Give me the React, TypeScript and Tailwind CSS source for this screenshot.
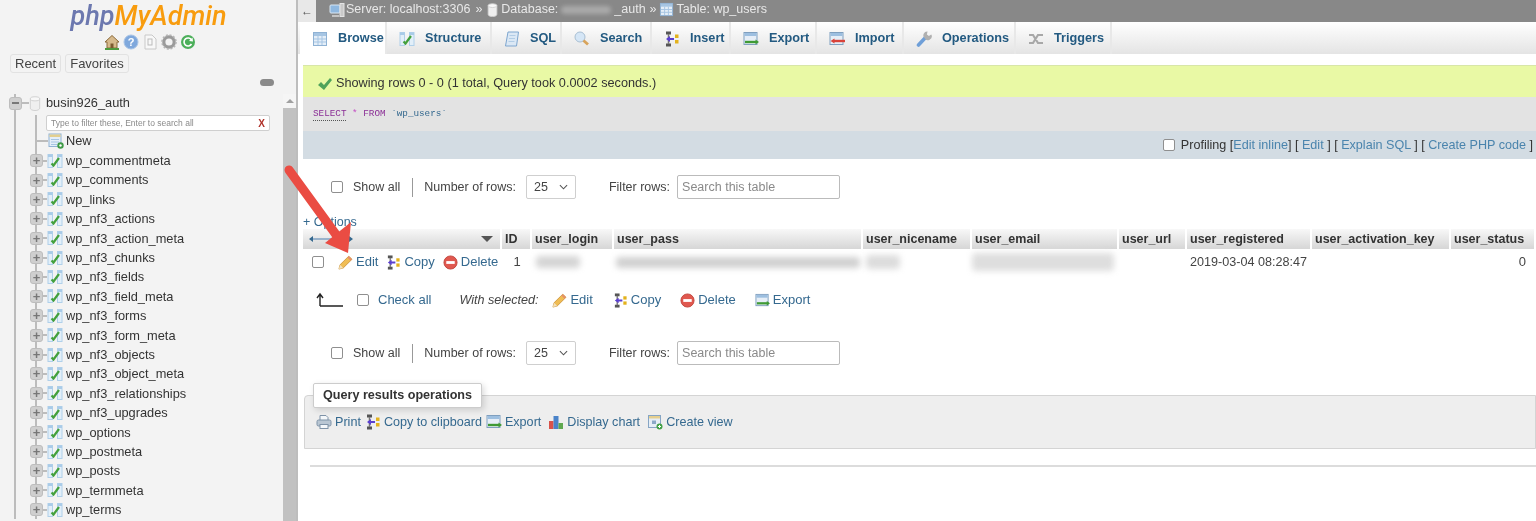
import type { ReactNode } from 'react';

const tables = [
  'wp_commentmeta', 'wp_comments', 'wp_links', 'wp_nf3_actions', 'wp_nf3_action_meta', 'wp_nf3_chunks',
  'wp_nf3_fields', 'wp_nf3_field_meta', 'wp_nf3_forms', 'wp_nf3_form_meta', 'wp_nf3_objects',
  'wp_nf3_object_meta', 'wp_nf3_relationships', 'wp_nf3_upgrades', 'wp_options', 'wp_postmeta',
  'wp_posts', 'wp_termmeta', 'wp_terms',
];

function GridIcon({ className = '' }: { className?: string }) {
  return (
    <svg viewBox="0 0 16 16" className={className}>
      <rect x="1.5" y="1.5" width="13" height="13" fill="#e4eef8" stroke="#8fb2d4" />
      <rect x="2" y="2" width="12" height="3" fill="#a6c5e3" />
      <path d="M6 5v9M10 5v9M2 8h12M2 11h12" stroke="#a6c5e3" fill="none" />
    </svg>
  );
}

function NewTableIcon({ className = '' }: { className?: string }) {
  return (
    <svg viewBox="0 0 16 16" className={className}>
      <rect x="1" y="1" width="12" height="12.5" fill="#e4eef8" stroke="#8fb2d4" />
      <rect x="1.5" y="1.5" width="11" height="2.5" fill="#e3cf8e" />
      <path d="M3 6.5h8M3 9h8M3 11.5h6" stroke="#a6c5e3" fill="none" />
      <circle cx="12.5" cy="12.5" r="3.2" fill="#3f9a47" />
      <circle cx="12.5" cy="12.5" r="1.2" fill="#fff" />
    </svg>
  );
}

function StructureIcon({ className = '' }: { className?: string }) {
  return (
    <svg viewBox="0 0 16 16" className={className}>
      <rect x="1" y="1.5" width="4.5" height="13" fill="#e2eff9" stroke="#b0d0ea" />
      <rect x="10.5" y="1.5" width="4.5" height="13" fill="#e2eff9" stroke="#b0d0ea" />
      <rect x="1" y="1.5" width="4.5" height="2.5" fill="#a9cbe8" />
      <rect x="10.5" y="1.5" width="4.5" height="2.5" fill="#a9cbe8" />
      <path d="M4.5 10.5l2 2L12 5" stroke="#43a03c" strokeWidth="2.2" fill="none" />
    </svg>
  );
}

function SqlIcon({ className = '' }: { className?: string }) {
  return (
    <svg viewBox="0 0 16 16" className={className}>
      <path d="M4 1h10.5L12.5 15H1.5z" fill="#dbe8f5" stroke="#7ea6cf" />
      <path d="M5.5 4.5h6M5 7.5h6M4.5 10.5h6" stroke="#b2cde6" fill="none" />
    </svg>
  );
}

function SearchIcon({ className = '' }: { className?: string }) {
  return (
    <svg viewBox="0 0 16 16" className={className}>
      <circle cx="6" cy="6" r="5" fill="#d5e6f6" stroke="#a9bfd3" />
      <path d="M9.5 9.5l4.5 4" stroke="#d8a45c" strokeWidth="2.8" fill="none" />
    </svg>
  );
}

function InsertIcon({ className = '' }: { className?: string }) {
  return (
    <svg viewBox="0 0 16 16" className={className}>
      <rect x="2" y="0.5" width="5" height="3" fill="#555" />
      <rect x="2" y="12.5" width="5" height="3" fill="#555" />
      <path d="M4.5 3v10" stroke="#777" strokeWidth="1.5" fill="none" />
      <path d="M2 8l4-3v2h4v2H6v2z" fill="#5a3fd0" />
      <rect x="11" y="3.5" width="3.5" height="3.5" fill="#e3b21c" />
      <rect x="11" y="9" width="3.5" height="3.5" fill="#e3b21c" />
    </svg>
  );
}

function ExportIcon({ className = '' }: { className?: string }) {
  return (
    <svg viewBox="0 0 16 16" className={className}>
      <rect x="1" y="1.5" width="13" height="12" fill="#e6eef7" stroke="#7f9fbf" />
      <rect x="1.5" y="2" width="12" height="3" fill="#9dbfe0" />
      <path d="M2 11h11" stroke="#3f9a35" strokeWidth="2.4" fill="none" />
      <path d="M12.5 8.5L16 11l-3.5 2.5z" fill="#3f9a35" />
    </svg>
  );
}

function ImportIcon({ className = '' }: { className?: string }) {
  return (
    <svg viewBox="0 0 16 16" className={className}>
      <rect x="1" y="1.5" width="13" height="12" fill="#e6eef7" stroke="#7f9fbf" />
      <rect x="1.5" y="2" width="12" height="3" fill="#9dbfe0" />
      <path d="M5 10h11" stroke="#d9433a" strokeWidth="2.4" fill="none" />
      <path d="M5.5 7.5L1.5 10l4 2.5z" fill="#d9433a" />
    </svg>
  );
}

function WrenchIcon({ className = '' }: { className?: string }) {
  return (
    <svg viewBox="0 0 16 16" className={className}>
      <path d="M2.5 14L10 6" stroke="#6f9fd8" strokeWidth="3.6" strokeLinecap="round" fill="none" />
      <path d="M8.5 7a3.8 3.8 0 0 1 3-6.5l-.6 3 2 1.5 2.4-1.5a3.8 3.8 0 0 1-6.8 3.5z" fill="#b0b0b0" />
    </svg>
  );
}

function TriggerIcon({ className = '' }: { className?: string }) {
  return (
    <svg viewBox="0 0 16 16" className={className}>
      <path d="M1 4h4l5 8h5M1 12h4l5-8h5" stroke="#a8a8a8" strokeWidth="2.2" fill="none" />
    </svg>
  );
}

function PencilIcon({ className = '' }: { className?: string }) {
  return (
    <svg viewBox="0 0 16 16" className={className}>
      <path d="M1 15l1.2-4.6L11.5 1.2l3.4 3.4-9.3 9.2z" fill="#f0bd54" stroke="#c58a2b" strokeWidth="0.8" />
      <path d="M1 15l1.2-4.6 3.4 3.4z" fill="#f3e2bd" />
      <path d="M11.5 1.2l3.4 3.4-1.5 1.5-3.4-3.4z" fill="#e58f6b" />
    </svg>
  );
}

function DeleteIcon({ className = '' }: { className?: string }) {
  return (
    <svg viewBox="0 0 16 16" className={className}>
      <circle cx="8" cy="8" r="7" fill="#e0584f" stroke="#c2463e" />
      <rect x="3.5" y="6.5" width="9" height="3" fill="#fff" />
    </svg>
  );
}

function PrintIcon({ className = '' }: { className?: string }) {
  return (
    <svg viewBox="0 0 16 16" className={className}>
      <path d="M4 6V1.5h6l2 2V6" fill="#f4f7fa" stroke="#7f93a8" />
      <rect x="1" y="6" width="14" height="6" rx="1.5" fill="#b9c6d3" stroke="#7f93a8" />
      <rect x="4" y="10.5" width="8" height="4" fill="#f4f7fa" stroke="#7f93a8" />
    </svg>
  );
}

function ChartIcon({ className = '' }: { className?: string }) {
  return (
    <svg viewBox="0 0 16 16" className={className}>
      <rect x="1" y="7" width="4.5" height="8" fill="#d9534a" />
      <rect x="5.5" y="2" width="5" height="13" fill="#4a83c9" />
      <rect x="10.5" y="9" width="4.5" height="6" fill="#5fa84f" />
    </svg>
  );
}

function ViewIcon({ className = '' }: { className?: string }) {
  return (
    <svg viewBox="0 0 16 16" className={className}>
      <rect x="1.5" y="1.5" width="12" height="12" fill="#e6eef6" stroke="#86a5c4" />
      <rect x="2" y="2" width="11" height="2.5" fill="#e5cf8f" />
      <rect x="5" y="6.5" width="4" height="3.5" fill="#8ba9c7" />
      <circle cx="12.5" cy="12.5" r="3" fill="#43a047" />
      <path d="M11 12.5h3M12.5 11v3" stroke="#fff" />
    </svg>
  );
}

function DbIcon({ className = '' }: { className?: string }) {
  return (
    <svg viewBox="0 0 12 16" className={className}>
      <path d="M1 3v10c0 1.4 2.2 2.5 5 2.5s5-1.1 5-2.5V3z" fill="#efefef" stroke="#cfcfcf" />
      <ellipse cx="6" cy="3" rx="5" ry="2.2" fill="#f8f8f8" stroke="#cfcfcf" />
    </svg>
  );
}

function ServerIcon({ className = '' }: { className?: string }) {
  return (
    <svg viewBox="0 0 16 16" className={className}>
      <rect x="1" y="3" width="10" height="8" rx="1" fill="#8fb8e0" stroke="#d8e6f3" />
      <rect x="11" y="1.5" width="4" height="13" fill="#c9c9c9" stroke="#e4e4e4" />
      <path d="M3 14h7" stroke="#d8d8d8" strokeWidth="1.5" />
    </svg>
  );
}

function Logo() {
  return (
    <div className="h-[32px] pl-[14px] text-center text-[27px] leading-[32px] font-medium italic font-['Roboto',sans-serif]">
      <span className="text-[#6c78af]">php</span>
      <span className="text-[#f89c0e]">MyAdmin</span>
    </div>
  );
}

function NavIcons() {
  return (
    <div className="mt-[2px] flex justify-center gap-[3px] pl-[16px]">
      <svg viewBox="0 0 16 16" className="h-4 w-4">
        <path d="M1 8l7-6.5L15 8h-2v6H3V8z" fill="#d6b98c" stroke="#8c6a3a" />
        <rect x="6.5" y="9.5" width="3" height="4.5" fill="#7c5a30" />
        <path d="M1 15h14" stroke="#4e9a3e" strokeWidth="2" />
      </svg>
      <svg viewBox="0 0 16 16" className="h-4 w-4">
        <circle cx="8" cy="8" r="7" fill="#7fa8dc" stroke="#a9c4e6" />
        <text x="8" y="12" textAnchor="middle" fontSize="11" fontWeight="700" fill="#fff" fontFamily="Liberation Sans">?</text>
      </svg>
      <svg viewBox="0 0 16 16" className="h-4 w-4">
        <path d="M3 1h7l4 4v10H3z" fill="#f8f8f8" stroke="#c8c8c8" />
        <rect x="6" y="5" width="4" height="6" fill="none" stroke="#bbb" />
      </svg>
      <svg viewBox="0 0 16 16" className="h-4 w-4">
        <circle cx="8" cy="8" r="5.2" fill="none" stroke="#9b9b9b" strokeWidth="3.2" />
        <circle cx="8" cy="8" r="7" fill="none" stroke="#b5b5b5" strokeWidth="1.6" strokeDasharray="2 1.7" />
      </svg>
      <svg viewBox="0 0 16 16" className="h-4 w-4">
        <circle cx="8" cy="8" r="7" fill="#4caf5a" />
        <path d="M11.5 6A4 4 0 1 0 11.5 10" stroke="#fff" strokeWidth="1.6" fill="none" />
        <path d="M9 7l4 .5-.5-4z" fill="#fff" />
      </svg>
    </div>
  );
}

function Sidebar() {
  return (
    <aside className="flex h-[521px] w-[298px] shrink-0 border-r-2 border-[#bdbdbd] bg-[#f3f3f3] text-[#333] font-['Liberation_Sans',sans-serif]">
      <div className="w-[283px] shrink-0">
        <Logo />
        <NavIcons />
        <div className="mt-[4px] flex gap-[4px] pl-[10px] text-[13px] leading-[15px] text-[#444]">
          <span className="rounded-[3px] border border-[#e2e2e2] px-[4px] py-px">Recent</span>
          <span className="rounded-[3px] border border-[#e2e2e2] px-[4px] py-px">Favorites</span>
        </div>
        <div className="mt-[6px] mr-[9px] flex justify-end">
          <span className="h-[7px] w-[14px] rounded-[4px] bg-[#8a8a8a]" />
        </div>
        <div className="relative mt-[8px] ml-[14px] border-l-2 border-[#bcbcbc] text-[12.8px] text-[#333]">
          <div className="-ml-[7px] flex h-[18px] items-center">
            <span className="flex h-[13px] w-[13px] items-center justify-center rounded-[3px] border border-[#bdbdbd] bg-[#cfcfcf]">
              <span className="h-[2px] w-[7px] bg-[#777]" />
            </span>
            <span className="h-[2px] w-[7px] bg-[#bcbcbc]" />
            <DbIcon className="h-[15px] w-[12px]" />
            <span className="ml-[5px]">busin926_auth</span>
          </div>
          <div className="mt-[3px] ml-[19px] border-l-2 border-[#bcbcbc]">
            <div className="ml-[9px] flex h-[16px] w-[224px] items-center justify-between rounded-[2px] border border-[#cfcfcf] bg-white px-[4px] text-[8.5px] text-[#8a8a8a]">
              <span>Type to filter these, Enter to search all</span>
              <span className="text-[10px] font-bold text-[#b0322a]">X</span>
            </div>
            <div className="flex h-[20px] items-center">
              <span className="h-[2px] w-[11px] bg-[#bcbcbc]" />
              <NewTableIcon className="h-[16px] w-[16px]" />
              <span className="ml-[2px]">New</span>
            </div>
            {tables.map((name) => (
              <div key={name} className="-ml-[7px] flex h-[19.4px] items-center">
                <span className="flex h-[13px] w-[13px] items-center justify-center rounded-[3px] border border-[#bdbdbd] bg-[#cfcfcf] text-[13px] leading-none font-bold text-[#777]">+</span>
                <span className="h-[2px] w-[4px] bg-[#bcbcbc]" />
                <StructureIcon className="h-[16px] w-[16px]" />
                <span className="ml-[3px] whitespace-nowrap">{name}</span>
              </div>
            ))}
          </div>
        </div>
      </div>
      <div className="flex flex-1 flex-col pt-[94px]">
        <div className="flex h-[14px] items-center justify-center bg-[#f5f5f5]">
          <span className="h-0 w-0 border-x-[4px] border-b-[4px] border-x-transparent border-b-[#a0a0a0]" />
        </div>
        <div className="flex-1 bg-[#c1c1c1]" />
      </div>
    </aside>
  );
}

function Tab({ icon, label, width, active }: { icon: ReactNode; label: string; width: string; active?: boolean }) {
  return (
    <div className={`flex h-full items-center gap-[10px] border-r-2 border-[#e8e8e8] pt-px pl-[12px] ${width} ${active ? 'bg-white' : ''}`}>
      {icon}
      <span className="text-[12.7px] font-bold text-[#235a81]">{label}</span>
    </div>
  );
}

function Tabs() {
  const cls = 'h-[16px] w-[16px] shrink-0';
  return (
    <div className="flex h-[32px] bg-gradient-to-b from-white to-[#e4e4e4] pl-[2px]">
      <Tab active width="w-[87px]" label="Browse" icon={<GridIcon className={cls} />} />
      <Tab width="w-[105px]" label="Structure" icon={<StructureIcon className={cls} />} />
      <Tab width="w-[70px]" label="SQL" icon={<SqlIcon className={cls} />} />
      <Tab width="w-[90px]" label="Search" icon={<SearchIcon className={cls} />} />
      <Tab width="w-[79px]" label="Insert" icon={<InsertIcon className={cls} />} />
      <Tab width="w-[86px]" label="Export" icon={<ExportIcon className={cls} />} />
      <Tab width="w-[87px]" label="Import" icon={<ImportIcon className={cls} />} />
      <Tab width="w-[112px]" label="Operations" icon={<WrenchIcon className={cls} />} />
      <Tab width="w-[96px]" label="Triggers" icon={<TriggerIcon className={cls} />} />
    </div>
  );
}

function NavRow() {
  return (
    <div className="flex h-[28px] items-center pl-[33px] text-[12.5px] text-[#444]">
      <span className="h-[12px] w-[12px] rounded-[2px] border border-[#8f8f8f] bg-white" />
      <span className="ml-[10px]">Show all</span>
      <span className="mr-[11px] ml-[12px] h-[19px] w-px bg-[#999]" />
      <span>Number of rows:</span>
      <span className="ml-[10px] flex h-[24px] w-[50px] items-center justify-between rounded-[2px] border border-[#cfcfcf] px-[7px]">
        25
        <svg viewBox="0 0 10 6" className="h-[6px] w-[9px]"><path d="M1 1l4 4 4-4" stroke="#555" strokeWidth="1.2" fill="none" /></svg>
      </span>
      <span className="ml-[33px]">Filter rows:</span>
      <span className="ml-[7px] flex h-[24px] w-[163px] items-center rounded-[2px] border border-[#bbb] px-[4px] text-[#8a8a8a]">Search this table</span>
    </div>
  );
}

function Link({ icon, label, className = '' }: { icon: ReactNode; label: string; className?: string }) {
  return (
    <span className={`flex items-center gap-[3px] ${className}`}>
      {icon}
      <span className="text-[#35698f]">{label}</span>
    </span>
  );
}

const headers = [
  { label: 'ID', w: 'w-[30px]' },
  { label: 'user_login', w: 'w-[82px]' },
  { label: 'user_pass', w: 'w-[249px]' },
  { label: 'user_nicename', w: 'w-[109px]' },
  { label: 'user_email', w: 'w-[147px]' },
  { label: 'user_url', w: 'w-[68px]' },
  { label: 'user_registered', w: 'w-[125px]' },
  { label: 'user_activation_key', w: 'w-[139px]' },
  { label: 'user_status', w: 'w-[85px]' },
];

function ResultTable() {
  const ic = 'h-[15px] w-[15px] shrink-0';
  return (
    <div className="text-[13px]">
      <div className="h-[14px] pl-[5px] leading-[15px] text-[12.5px] text-[#35698f]">+ Options</div>
      <div className="flex h-[20px] pl-[5px]">
        <div className="flex w-[199px] shrink-0 items-center justify-between border-r-2 border-white bg-gradient-to-b from-[#f8f8f8] to-[#d6d6d6] pl-[6px] pr-[7px]">
          <svg viewBox="0 0 44 8" className="h-[8px] w-[44px]"><path d="M2 4h40" stroke="#4d7fb0" /><path d="M0 4l4-3v6zM44 4l-4-3v6z" fill="#35698f" /></svg>
          <span className="h-0 w-0 border-x-[6px] border-t-[6px] border-x-transparent border-t-[#555]" />
        </div>
        {headers.map((h) => (
          <div key={h.label} className={`flex shrink-0 items-center border-r-2 border-white bg-gradient-to-b from-[#f8f8f8] to-[#d6d6d6] pl-[3px] text-[12.5px] font-bold text-[#333] ${h.w}`}>
            {h.label}
          </div>
        ))}
      </div>
      <div className="flex h-[26px] items-center pl-[5px] text-[#444]">
        <div className="flex w-[199px] shrink-0 items-center pl-[9px]">
          <span className="h-[12px] w-[12px] rounded-[2px] border border-[#8f8f8f] bg-white" />
          <Link className="ml-[14px]" label="Edit" icon={<PencilIcon className={ic} />} />
          <Link className="ml-[8px]" label="Copy" icon={<InsertIcon className={ic} />} />
          <Link className="ml-[8px]" label="Delete" icon={<DeleteIcon className={ic} />} />
        </div>
        <div className="w-[30px] shrink-0 text-center">1</div>
        <div className="flex w-[82px] shrink-0 pl-[4px]"><span className="h-[12px] w-[44px] rounded bg-[#d4d4d4] blur-[3px]" /></div>
        <div className="flex w-[249px] shrink-0 pl-[2px]"><span className="h-[11px] w-[244px] rounded bg-[#d0d0d0] blur-[3px]" /></div>
        <div className="flex w-[109px] shrink-0 pl-[3px]"><span className="h-[14px] w-[34px] rounded bg-[#dcdcdc] blur-[3px]" /></div>
        <div className="flex w-[147px] shrink-0"><span className="h-[18px] w-[142px] rounded bg-[#dedede] blur-[3px]" /></div>
        <div className="w-[68px] shrink-0" />
        <div className="w-[125px] shrink-0 pl-[3px] text-[12.6px] whitespace-nowrap">2019-03-04 08:28:47</div>
        <div className="w-[139px] shrink-0" />
        <div className="w-[85px] shrink-0 pr-[10px] text-right">0</div>
      </div>
    </div>
  );
}

function BulkRow() {
  const ic = 'h-[15px] w-[15px] shrink-0';
  return (
    <div className="flex h-[28px] items-center pl-[17px] text-[13px] text-[#444]">
      <svg viewBox="0 0 28 16" className="h-[16px] w-[28px]">
        <path d="M5 14V3M2 6l3-4 3 4M5 14h23" stroke="#222" strokeWidth="1.4" fill="none" />
      </svg>
      <span className="ml-[14px] h-[12px] w-[12px] rounded-[2px] border border-[#8f8f8f] bg-white" />
      <span className="ml-[9px] text-[#35698f]">Check all</span>
      <span className="ml-[28px] text-[12.6px] italic">With selected:</span>
      <Link className="ml-[14px]" label="Edit" icon={<PencilIcon className={ic} />} />
      <Link className="ml-[20px]" label="Copy" icon={<InsertIcon className={ic} />} />
      <Link className="ml-[19px]" label="Delete" icon={<DeleteIcon className={ic} />} />
      <Link className="ml-[19px]" label="Export" icon={<ExportIcon className={ic} />} />
    </div>
  );
}

function Operations() {
  const ic = 'h-[16px] w-[16px] shrink-0';
  return (
    <div className="relative mt-[28px] ml-[6px]">
      <div className="absolute -top-[12px] left-[9px] z-10 rounded-[2px] border border-[#ccc] bg-white px-[9px] py-[4px] text-[12.6px] leading-[15px] font-bold text-[#333] shadow-[2px_2px_6px_rgba(0,0,0,0.15)]">
        Query results operations
      </div>
      <div className="flex h-[54px] items-end rounded-tl-[4px] border border-[#d4d4d4] bg-[#eeeeee] pb-[18px] pl-[11px] text-[12.6px] leading-[15px]">
        <Link label="Print" icon={<PrintIcon className={ic} />} />
        <Link className="ml-[4px]" label="Copy to clipboard" icon={<InsertIcon className={ic} />} />
        <Link className="ml-[4px]" label="Export" icon={<ExportIcon className={ic} />} />
        <Link className="ml-[7px]" label="Display chart" icon={<ChartIcon className={ic} />} />
        <Link className="ml-[7px]" label="Create view" icon={<ViewIcon className={ic} />} />
      </div>
    </div>
  );
}

function Main() {
  return (
    <main className="min-w-0 flex-1 bg-white font-['Liberation_Sans',sans-serif] text-[#444]">
      <div className="flex h-[22px] items-center bg-[#888888] text-[12.5px] text-[#e8e8e8]">
        <div className="flex h-full w-[18px] items-center justify-center bg-[#e8e8e8] text-[12px] text-[#555]">←</div>
        <div className="flex items-center pb-[3px]">
          <ServerIcon className="ml-[13px] h-[16px] w-[16px]" />
          <span className="ml-px">Server: localhost:3306</span>
          <span className="mx-[5px]">»</span>
          <DbIcon className="h-[14px] w-[11px]" />
          <span className="ml-[3px]">Database:</span>
          <span className="mx-[3px] h-[8px] w-[50px] rounded bg-[#a9a9a9] blur-[2px]" />
          <span>_auth</span>
          <span className="mr-[2px] ml-[4px]">»</span>
          <GridIcon className="h-[15px] w-[15px]" />
          <span className="ml-[3px]">Table: wp_users</span>
        </div>
      </div>
      <Tabs />
      <div className="mt-[11px] ml-[5px]">
        <div className="flex h-[32px] items-center border-t border-[#d8e6a8] bg-[#e9f9a5] pt-[4px] pl-[14px] text-[12.7px] text-[#333]">
          <svg viewBox="0 0 16 14" className="mr-[3px] h-[14px] w-[16px]"><path d="M1 8l3-3 3 3 6-7 2 2-8 10z" fill="#4fa35a" /></svg>
          Showing rows 0 - 0 (1 total, Query took 0.0002 seconds.)
        </div>
        <div className="flex h-[34px] items-center whitespace-pre bg-[#e3e3e3] pl-[10px] font-['Liberation_Mono',monospace] text-[9.3px]">
          <span className="border-b border-dotted border-[#555] text-[#8b2f96]">SELECT</span>
          <span className="text-[#c44ec4]"> * </span>
          <span className="text-[#8b2f96]">FROM </span>
          <span className="text-[#35698f]">`wp_users`</span>
        </div>
        <div className="flex h-[28px] items-center justify-end gap-[5px] bg-[#d3dce3] pr-[3px] text-[12.6px] text-[#333]">
          <span className="mr-px h-[12px] w-[12px] rounded-[2px] border border-[#8f8f8f] bg-white" />
          <span className="whitespace-nowrap">
            Profiling [<span className="text-[#4a84ad]">Edit inline</span>] [ <span className="text-[#4a84ad]">Edit</span> ] [ <span className="text-[#4a84ad]">Explain SQL</span> ] [ <span className="text-[#4a84ad]">Create PHP code</span> ]
          </span>
        </div>
      </div>
      <div className="mt-[14px]"><NavRow /></div>
      <div className="mt-[14px]"><ResultTable /></div>
      <div className="mt-[11px]"><BulkRow /></div>
      <div className="mt-[25px]"><NavRow /></div>
      <Operations />
      <div className="mt-[16px] ml-[12px] h-[2px] bg-[#dcdcdc]" />
    </main>
  );
}

export default function App() {
  return (
    <div className="relative flex h-[521px] w-[1536px] overflow-hidden bg-white blur-[0.4px]">
      <Sidebar />
      <Main />
      {/* red annotation arrow */}
      <svg viewBox="0 0 1536 521" className="pointer-events-none absolute inset-0 z-20 h-[521px] w-[1536px]">
        <path d="M289 170L337 236" stroke="#ea4c43" strokeWidth="9" strokeLinecap="round" fill="none" />
        <path d="M348 253L325 243L351 222z" fill="#ea4c43" />
      </svg>
    </div>
  );
}
